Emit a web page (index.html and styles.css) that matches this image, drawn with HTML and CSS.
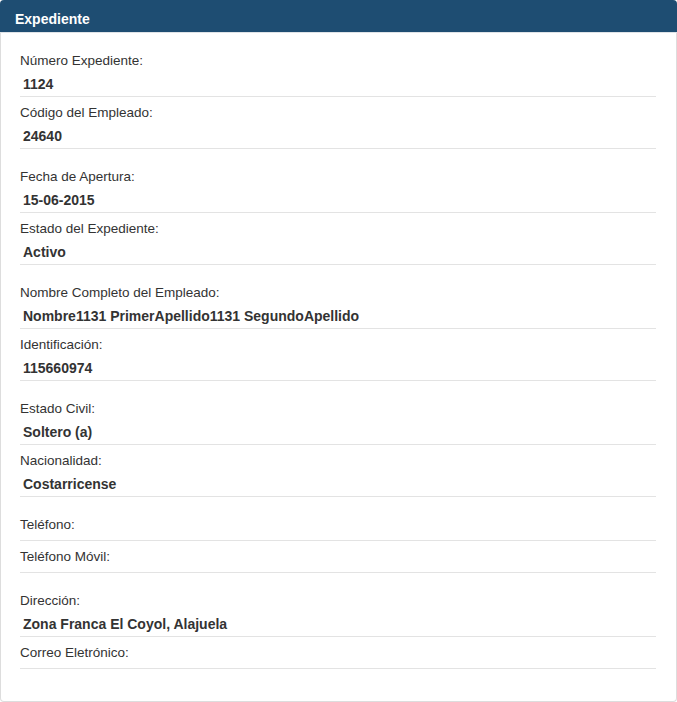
FILE: index.html
```html
<!DOCTYPE html>
<html lang="es">
<head>
<meta charset="utf-8">
<title>Expediente</title>
<link rel="stylesheet" href="styles.css">
</head>
<body>
<div class="panel">
  <div class="panel-heading">Expediente</div>
  <div class="panel-body">
    <div class="group">
      <div class="item"><div class="label">Número Expediente:</div><div class="value">1124</div></div>
      <div class="item"><div class="label">Código del Empleado:</div><div class="value">24640</div></div>
    </div>
    <div class="group">
      <div class="item"><div class="label">Fecha de Apertura:</div><div class="value">15-06-2015</div></div>
      <div class="item"><div class="label">Estado del Expediente:</div><div class="value">Activo</div></div>
    </div>
    <div class="group">
      <div class="item"><div class="label">Nombre Completo del Empleado:</div><div class="value">Nombre1131 PrimerApellido1131 SegundoApellido</div></div>
      <div class="item"><div class="label">Identificación:</div><div class="value">115660974</div></div>
    </div>
    <div class="group">
      <div class="item"><div class="label">Estado Civil:</div><div class="value">Soltero (a)</div></div>
      <div class="item"><div class="label">Nacionalidad:</div><div class="value">Costarricense</div></div>
    </div>
    <div class="group">
      <div class="item"><div class="label">Teléfono:</div></div>
      <div class="item"><div class="label">Teléfono Móvil:</div></div>
    </div>
    <div class="group">
      <div class="item"><div class="label">Dirección:</div><div class="value">Zona Franca El Coyol, Alajuela</div></div>
      <div class="item"><div class="label">Correo Eletrónico:</div></div>
    </div>
  </div>
</div>
</body>
</html>
```
FILE: styles.css
```css
html, body {
  margin: 0;
  padding: 0;
  background: #fff;
}
body {
  font-family: "Liberation Sans", Arial, Helvetica, sans-serif;
  font-size: 14px;
  color: #333;
}
.panel {
  width: 677px;
  box-sizing: border-box;
  border: 1px solid #ddd;
  border-top: none;
  border-radius: 4px;
  background: #fff;
}
.panel-heading {
  margin: 0 -1px;
  height: 33px;
  box-sizing: border-box;
  padding: 9px 15px 0;
  line-height: 20px;
  background: #1e4d72;
  color: #fff;
  font-weight: bold;
  border-radius: 4px 4px 0 0;
  border-bottom: 1px solid #dfe3e7;
}
.panel-body {
  padding: 0 20px 32px 19px;
}
.group {
  margin-top: 12px;
}
.item {
  padding: 6px 0 5px;
  border-bottom: 1px solid #e3e3e3;
}
.label {
  font-size: 13.5px;
  line-height: 20px;
}
.value {
  padding: 5px 0 0 3px;
  margin-bottom: -2px;
  line-height: 17px;
  font-weight: bold;
}
```
